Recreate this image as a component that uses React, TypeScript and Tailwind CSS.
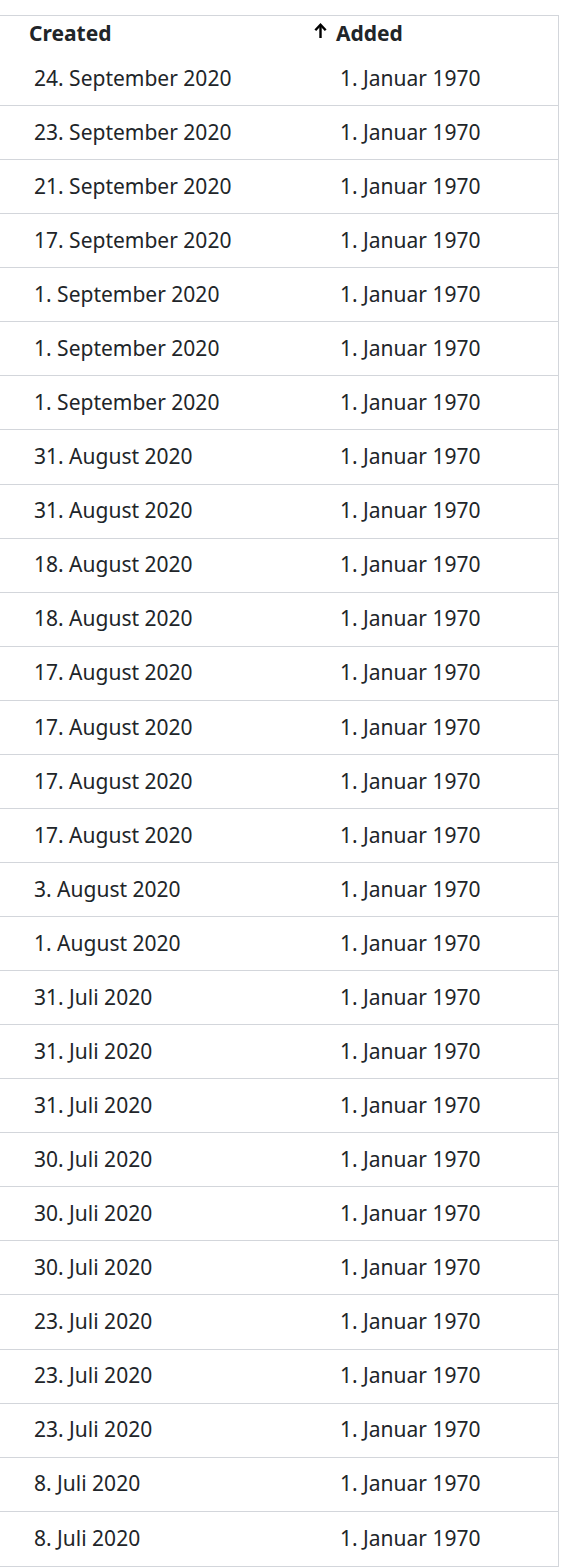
const rows: string[] = [
  "24. September 2020",
  "23. September 2020",
  "21. September 2020",
  "17. September 2020",
  "1. September 2020",
  "1. September 2020",
  "1. September 2020",
  "31. August 2020",
  "31. August 2020",
  "18. August 2020",
  "18. August 2020",
  "17. August 2020",
  "17. August 2020",
  "17. August 2020",
  "17. August 2020",
  "3. August 2020",
  "1. August 2020",
  "31. Juli 2020",
  "31. Juli 2020",
  "31. Juli 2020",
  "30. Juli 2020",
  "30. Juli 2020",
  "30. Juli 2020",
  "23. Juli 2020",
  "23. Juli 2020",
  "23. Juli 2020",
  "8. Juli 2020",
  "8. Juli 2020",
];

function SortArrow() {
  return (
    <svg width="13" height="15" viewBox="0 0 13 15" fill="none" aria-hidden="true">
      <path d="M6.5 15V2" stroke="#000" strokeWidth="2.4" />
      <path d="M1.3 7.3L6.5 1.8L11.7 7.3" stroke="#000" strokeWidth="2.4" strokeLinejoin="miter" />
    </svg>
  );
}

export default function App() {
  return (
    <div className="bg-white min-h-[1567px] pt-[15px] font-['Noto_Sans',sans-serif] text-[#212529]">
      <div className="w-[559px] border-t border-r border-b border-[#d3d6db]">
        <div className="grid grid-cols-[309px_1fr] h-[36px] items-center text-[21px] font-bold">
          <div className="pl-[29px]">Created</div>
          <div className="flex items-center gap-[9px] pl-[5px]">
            <span className="-mt-[8px]">
              <SortArrow />
            </span>
            <span>Added</span>
          </div>
        </div>
        {rows.map((r, i) => (
          <div
            key={i}
            className={
              "grid grid-cols-[309px_1fr] h-[54.07px] items-center text-[21px] " +
              (i < rows.length - 1 ? "border-b border-[#d3d6db]" : "")
            }
          >
            <div className="pl-[34px]">{r}</div>
            <div className="pl-[31px]">1. Januar 1970</div>
          </div>
        ))}
      </div>
    </div>
  );
}
